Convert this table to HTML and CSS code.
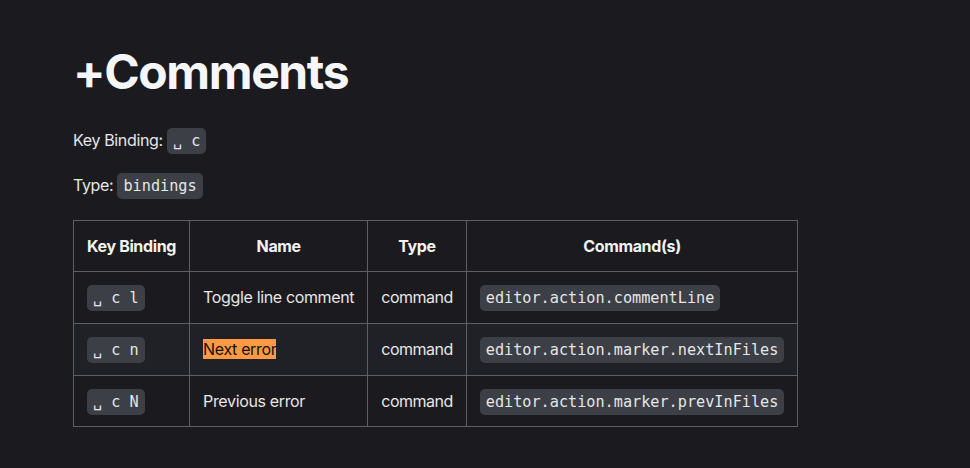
FILE: index.html
```html
<!DOCTYPE html>
<html lang="en">
<head>
<meta charset="utf-8">
<title>+Comments</title>
<link rel="stylesheet" href="styles.css">
</head>
<body>
<main class="doc">
  <h1 class="title">+Comments</h1>
  <p class="meta">Key Binding: <code class="code">␣ c</code></p>
  <p class="meta">Type: <code class="code">bindings</code></p>
  <table class="table">
    <thead>
      <tr>
        <th>Key Binding</th>
        <th>Name</th>
        <th>Type</th>
        <th>Command(s)</th>
      </tr>
    </thead>
    <tbody>
      <tr>
        <td><code class="code">␣ c l</code></td>
        <td>Toggle line comment</td>
        <td>command</td>
        <td><code class="code">editor.action.commentLine</code></td>
      </tr>
      <tr>
        <td><code class="code">␣ c n</code></td>
        <td><mark class="mark">Next error</mark></td>
        <td>command</td>
        <td><code class="code">editor.action.marker.nextInFiles</code></td>
      </tr>
      <tr>
        <td><code class="code">␣ c N</code></td>
        <td>Previous error</td>
        <td>command</td>
        <td><code class="code">editor.action.marker.prevInFiles</code></td>
      </tr>
    </tbody>
  </table>
</main>
</body>
</html>
```

FILE: styles.css
```css
html, body {
  margin: 0;
  padding: 0;
  background: #1b1b1f;
}
body {
  font-family: Inter, "Noto Sans", sans-serif;
  font-size: 16px;
  letter-spacing: -0.35px;
  color: #e6e6e6;
}
.doc {
  padding: 43px 0 0 73px;
}
.title {
  margin: 0 0 27px;
  font-size: 48px;
  line-height: 1.2;
  font-weight: 700;
  color: #f5f6f7;
  letter-spacing: -1.4px;
}
.meta {
  margin: 0 0 20px;
  line-height: 25.6px;
}
.code {
  font-family: "DejaVu Sans Mono", monospace;
  font-size: 15.2px;
  letter-spacing: 0;
  line-height: 1;
  background: #3c3f45;
  color: #e6e6e6;
  padding: 4px 6px;
  border-radius: 5px;
}
.table {
  border-collapse: collapse;
  margin-top: 21px;
}
.table th,
.table td {
  border: 1px solid #5c5f65;
  padding: 13px 13px;
  line-height: 24.6px;
  text-align: left;
  white-space: nowrap;
}
.table td:nth-child(3) {
  letter-spacing: -0.5px;
}
.table th {
  text-align: center;
  font-weight: 700;
  color: #f2f2f2;
}
.table tbody tr:nth-child(2) {
  background: #202127;
}
.mark {
  background: #ff9944;
  color: #111;
}
```
